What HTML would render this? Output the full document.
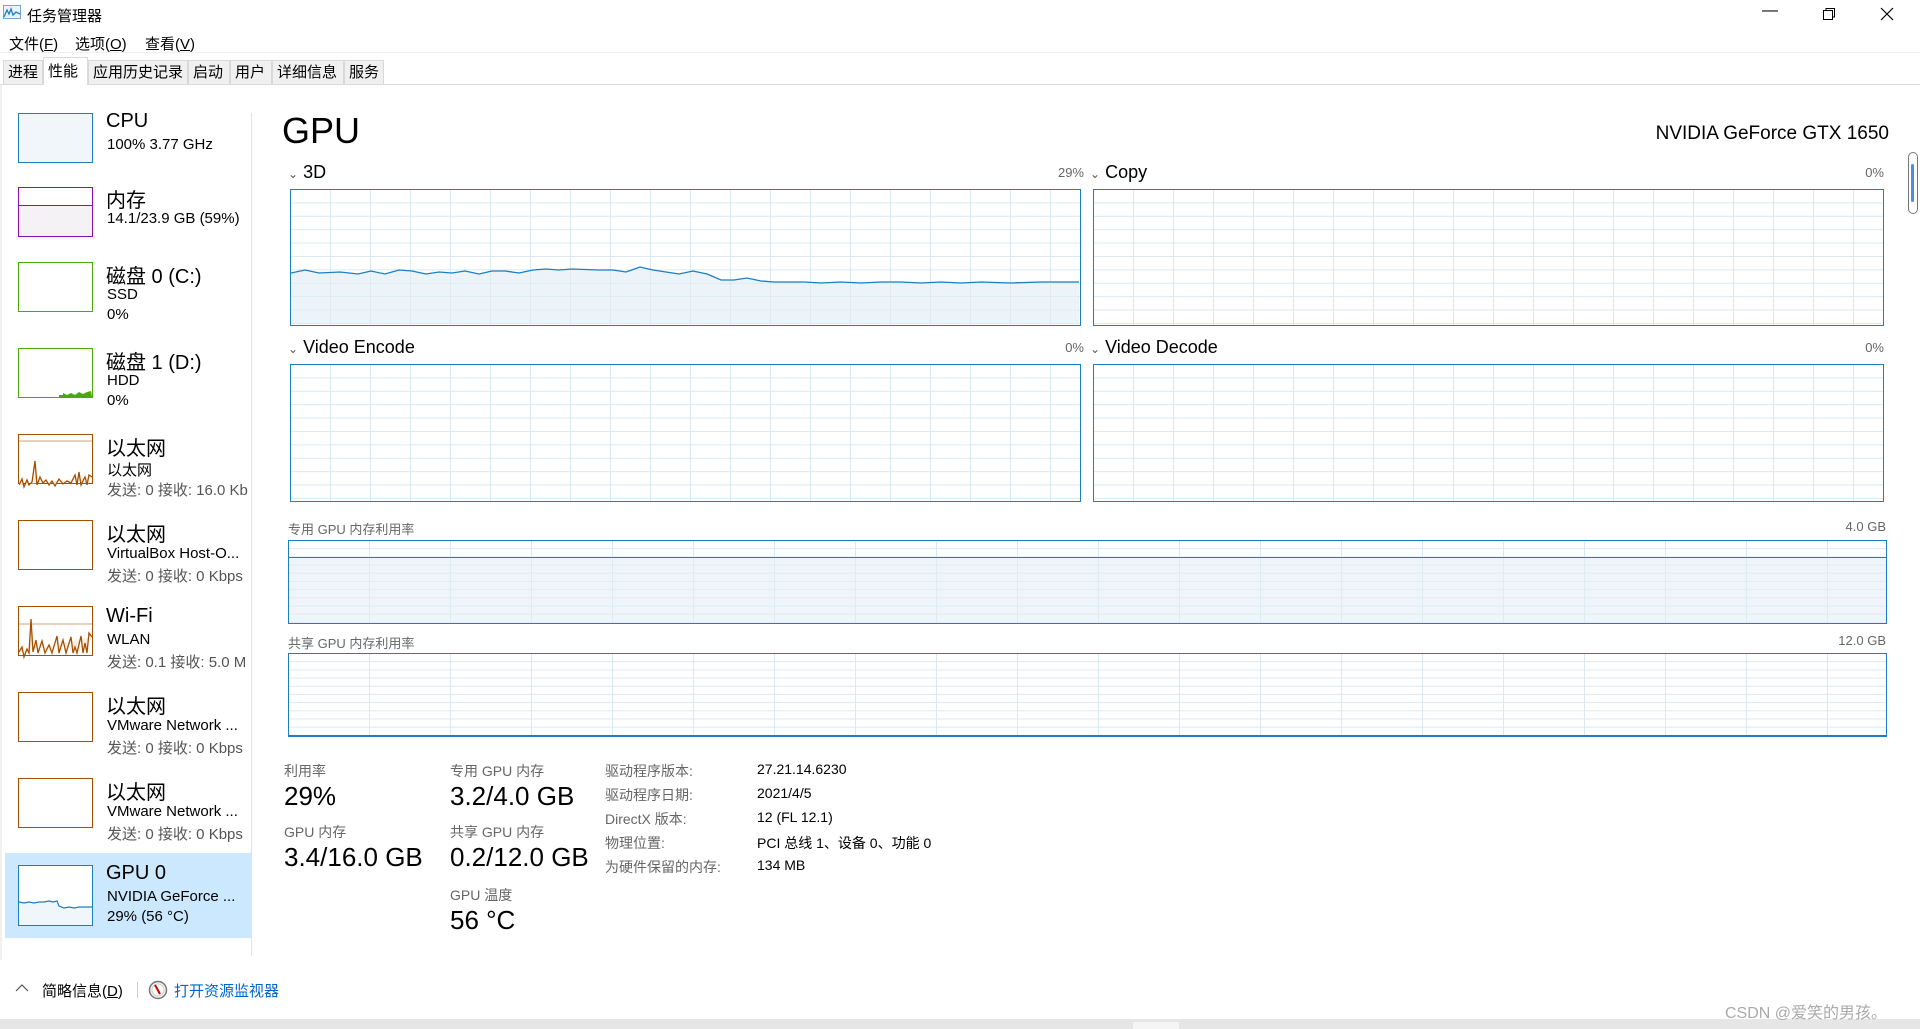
<!DOCTYPE html>
<html><head><meta charset="utf-8"><style>
*{margin:0;padding:0;box-sizing:border-box}
body{width:1920px;height:1029px;overflow:hidden;background:#fff;font-family:"Liberation Sans","Noto Sans CJK SC",sans-serif;color:#000;position:relative}
.a{position:absolute;white-space:nowrap}
.tab{position:absolute;top:60px;height:24px;background:#f0f0f0;border:1px solid #d9d9d9;border-bottom:none;font-size:15px;line-height:24px;padding:0 4px;color:#000}
.thumb{position:absolute;left:18px;width:75px;height:50px;border:1px solid}
.t1{position:absolute;left:106px;font-size:20px}
.t2{position:absolute;left:107px;font-size:15px}
.t3{position:absolute;left:107px;font-size:15px;color:#555}
.g{position:absolute;border:1.5px solid #1b7fc0;background-color:#fff;
background-image:linear-gradient(to right,#d9e9f3 1px,transparent 1px),linear-gradient(to bottom,#d9e9f3 1px,transparent 1px);
background-size:40px 100%,100% 13.4px;background-position:-1px 0,0 -1px}
.gm{background-size:81px 100%,100% 8.2px}
.lbl{position:absolute;font-size:18px}
.pct{position:absolute;font-size:13px;color:#666;text-align:right}
.sl{position:absolute;font-size:14px;color:#666}
.sv{position:absolute;font-size:26px}
.il{position:absolute;font-size:14px;color:#666;left:605px}
.iv{position:absolute;font-size:14px;color:#000;left:757px}
</style></head><body>
<svg class="a" style="left:3px;top:5px" width="18" height="14"><rect x="0.5" y="0.5" width="17" height="13" fill="#eaf3fb" stroke="#7aa7cc"/><polyline points="1,12 4,5 6,9 8,4 10,10 13,7 17,9" fill="none" stroke="#1b7fc0" stroke-width="1.3"/></svg>
<div class="a" style="left:27px;top:5px;font-size:15px">任务管理器</div>
<div class="a" style="left:1762px;top:2px;font-size:16px">&#8212;</div>
<svg class="a" style="left:1822px;top:7px" width="14" height="14"><rect x="1.5" y="3.5" width="9" height="9" fill="none" stroke="#000"/><path d="M4 3.5V1.5h8.5v8.5H10.5" fill="none" stroke="#000"/></svg>
<svg class="a" style="left:1880px;top:7px" width="14" height="14"><path d="M1 1L13 13M13 1L1 13" stroke="#000" stroke-width="1.2"/></svg>
<div class="a" style="left:9px;top:33px;font-size:15px">文件(<u>F</u>)</div>
<div class="a" style="left:75px;top:33px;font-size:15px">选项(<u>O</u>)</div>
<div class="a" style="left:145px;top:33px;font-size:15px">查看(<u>V</u>)</div>
<div class="a" style="left:0;top:52px;width:1920px;height:1px;background:#f0f0f0"></div>
<div class="a" style="left:0;top:84px;width:1920px;height:1px;background:#d9d9d9"></div>
<div class="tab" style="left:3px;width:40px">进程</div>
<div class="tab" style="left:43px;width:45px;top:57px;height:28px;background:#fff;padding-top:2px">性能</div>
<div class="tab" style="left:88px;width:100px">应用历史记录</div>
<div class="tab" style="left:188px;width:42px">启动</div>
<div class="tab" style="left:230px;width:42px">用户</div>
<div class="tab" style="left:272px;width:72px">详细信息</div>
<div class="tab" style="left:344px;width:40px">服务</div>
<div class="a" style="left:0;top:85px;width:2px;height:875px;background:#f0f0f0"></div>
<div class="a" style="left:251px;top:113px;width:1px;height:843px;background:#e3e3e3"></div>
<div class="a" style="left:5px;top:853px;width:246px;height:85px;background:#cce8ff"></div>

<div class="thumb" style="top:113px;border-color:#1b7fc0;background:#f1f6fa"></div>
<div class="t1" style="top:110px">CPU</div><div class="t2" style="top:136px">100% 3.77 GHz</div>

<div class="thumb" style="top:187px;border-color:#8b12ae;background:#fff"><div style="position:absolute;left:0;right:0;top:17px;bottom:0;background:#f4f2f4;border-top:1px solid #8b12ae"></div></div>
<div class="t1" style="top:184px">内存</div><div class="t2" style="top:210px">14.1/23.9 GB (59%)</div>

<div class="thumb" style="top:262px;border-color:#4da60c"></div>
<div class="t1" style="top:260px">磁盘 0 (C:)</div><div class="t2" style="top:286px">SSD</div><div class="t2" style="top:306px">0%</div>

<div class="thumb" style="top:348px;border-color:#4da60c"><svg width="73" height="48" style="position:absolute"><path d="M40 48L40 46L44 46L44 44L48 46L52 44L56 46L60 43L64 45L68 43L72 42L73 48Z" fill="#4da60c"/></svg></div>
<div class="t1" style="top:346px">磁盘 1 (D:)</div><div class="t2" style="top:372px">HDD</div><div class="t2" style="top:392px">0%</div>

<div class="thumb" style="top:434px;border-color:#a74f01"><svg width="73" height="58" style="position:absolute"><line x1="0" y1="6" x2="73" y2="6" stroke="#d2a27a"/><polyline points="0,50 3,44 5,52 8,45 10,50 13,47 16,26 18,50 21,42 24,48 27,45 30,50 33,46 36,51 40,44 44,49 48,46 52,48 56,40 58,50 60,37 62,50 66,42 68,50 70,40 73,42" fill="#fbeee2" stroke="#a74f01" stroke-width="1.3"/></svg></div>
<div class="t1" style="top:432px">以太网</div><div class="t2" style="top:459px">以太网</div><div class="t3" style="top:479px">发送: 0 接收: 16.0 Kb</div>

<div class="thumb" style="top:520px;border-color:#a74f01"></div>
<div class="t1" style="top:518px">以太网</div><div class="t2" style="top:545px">VirtualBox Host-O...</div><div class="t3" style="top:565px">发送: 0 接收: 0 Kbps</div>

<div class="thumb" style="top:606px;border-color:#a74f01"><svg width="73" height="58" style="position:absolute"><line x1="0" y1="17" x2="73" y2="17" stroke="#d2a27a"/><polyline points="0,45 3,40 5,50 8,42 10,46 12,12 14,45 17,33 19,46 23,34 26,46 30,38 33,46 38,29 40,46 44,33 47,46 52,30 54,46 56,40 58,46 62,29 64,46 66,36 68,46 70,26 73,30" fill="#fbeee2" stroke="#a74f01" stroke-width="1.3"/></svg></div>
<div class="t1" style="top:605px">Wi-Fi</div><div class="t2" style="top:631px">WLAN</div><div class="t3" style="top:651px">发送: 0.1 接收: 5.0 M</div>

<div class="thumb" style="top:692px;border-color:#a74f01"></div>
<div class="t1" style="top:690px">以太网</div><div class="t2" style="top:717px">VMware Network ...</div><div class="t3" style="top:737px">发送: 0 接收: 0 Kbps</div>

<div class="thumb" style="top:778px;border-color:#a74f01"></div>
<div class="t1" style="top:776px">以太网</div><div class="t2" style="top:803px">VMware Network ...</div><div class="t3" style="top:823px">发送: 0 接收: 0 Kbps</div>

<div class="thumb" style="top:865px;height:61px;border-color:#1b7fc0;background:#fff"><svg width="73" height="59" style="position:absolute"><path d="M0 36L10 37L20 36L30 36L32 35L38 35L40 40L50 42L60 41L73 41L73 59L0 59Z" fill="#f1f6fa"/><polyline points="0,36 5,37 10,36 15,37 20,36 25,36 30,35 34,36 38,35 40,40 45,42 50,41 55,42 60,41 65,41 73,41" fill="none" stroke="#1b7fc0" stroke-width="1.2"/></svg></div>
<div class="t1" style="top:862px">GPU 0</div><div class="t2" style="top:888px">NVIDIA GeForce ...</div><div class="t2" style="top:908px">29% (56 °C)</div>

<div class="a" style="left:282px;top:110px;font-size:36px">GPU</div>
<div class="a" style="right:31px;top:123px;font-size:19px">NVIDIA GeForce GTX 1650</div>
<div class="a" style="left:1908px;top:152px;width:10px;height:62px;border:1.5px solid #777;border-radius:5px"><div style="position:absolute;left:2px;top:11px;width:3px;height:38px;background:#4a90e2;border-radius:2px"></div></div>

<div class="lbl" style="left:288px;top:162px"><span style="font-size:12px;color:#555">&#8964;</span> 3D</div>
<div class="pct" style="left:1040px;width:44px;top:165px">29%</div>
<div class="lbl" style="left:1090px;top:162px"><span style="font-size:12px;color:#555">&#8964;</span> Copy</div>
<div class="pct" style="left:1840px;width:44px;top:165px">0%</div>
<div class="g" style="left:290px;top:189px;width:791px;height:137px">
<svg width="788" height="134" style="position:absolute;left:0;top:0"><path d="M0 83L14 80L28 83L49 82L67 84L80 81L94 84L108 80L121 81L135 84L148 82L161 83L174 81L188 84L201 81L214 81L228 83L242 80L255 79L268 80L281 79L308 80L322 80L335 82L349 77L362 80L375 82L388 84L402 81L416 84L430 90L443 90L456 88L470 91L483 92L500 92L513 92L530 93L550 92L570 93L590 92L610 92L630 93L650 92L670 93L690 92L720 93L750 92L788 92L788 140L0 140Z" fill="rgba(225,236,245,.6)"/><polyline points="0,83 14,80 28,83 49,82 67,84 80,81 94,84 108,80 121,81 135,84 148,82 161,83 174,81 188,84 201,81 214,81 228,83 242,80 255,79 268,80 281,79 308,80 322,80 335,82 349,77 362,80 375,82 388,84 402,81 416,84 430,90 443,90 456,88 470,91 483,92 500,92 513,92 530,93 550,92 570,93 590,92 610,92 630,93 650,92 670,93 690,92 720,93 750,92 788,92" fill="none" stroke="#1b7fc0" stroke-width="1.3"/></svg></div>
<div class="g" style="left:1093px;top:189px;width:791px;height:137px"></div>

<div class="lbl" style="left:288px;top:337px"><span style="font-size:12px;color:#555">&#8964;</span> Video Encode</div>
<div class="pct" style="left:1040px;width:44px;top:340px">0%</div>
<div class="lbl" style="left:1090px;top:337px"><span style="font-size:12px;color:#555">&#8964;</span> Video Decode</div>
<div class="pct" style="left:1840px;width:44px;top:340px">0%</div>
<div class="g" style="left:290px;top:364px;width:791px;height:138px"></div>
<div class="g" style="left:1093px;top:364px;width:791px;height:138px"></div>

<div class="a" style="left:288px;top:519px;font-size:13px;color:#666">专用 GPU 内存利用率</div>
<div class="pct" style="left:1800px;width:86px;top:519px">4.0 GB</div>
<div class="g gm" style="left:288px;top:540px;width:1599px;height:84px"><div style="position:absolute;left:0;right:0;top:16px;bottom:0;background:rgba(225,236,245,.55);border-top:1.5px solid #1b7fc0"></div></div>
<div class="a" style="left:288px;top:633px;font-size:13px;color:#666">共享 GPU 内存利用率</div>
<div class="pct" style="left:1800px;width:86px;top:633px">12.0 GB</div>
<div class="g gm" style="left:288px;top:653px;width:1599px;height:84px;border-bottom-width:2px"></div>

<div class="sl" style="left:284px;top:761px">利用率</div>
<div class="sv" style="left:284px;top:781px">29%</div>
<div class="sl" style="left:284px;top:822px">GPU 内存</div>
<div class="sv" style="left:284px;top:842px">3.4/16.0 GB</div>
<div class="sl" style="left:450px;top:761px">专用 GPU 内存</div>
<div class="sv" style="left:450px;top:781px">3.2/4.0 GB</div>
<div class="sl" style="left:450px;top:822px">共享 GPU 内存</div>
<div class="sv" style="left:450px;top:842px">0.2/12.0 GB</div>
<div class="sl" style="left:450px;top:885px">GPU 温度</div>
<div class="sv" style="left:450px;top:905px">56 °C</div>

<div class="il" style="top:761px">驱动程序版本:</div><div class="iv" style="top:761px">27.21.14.6230</div>
<div class="il" style="top:785px">驱动程序日期:</div><div class="iv" style="top:785px">2021/4/5</div>
<div class="il" style="top:809px">DirectX 版本:</div><div class="iv" style="top:809px">12 (FL 12.1)</div>
<div class="il" style="top:833px">物理位置:</div><div class="iv" style="top:833px">PCI 总线 1、设备 0、功能 0</div>
<div class="il" style="top:857px">为硬件保留的内存:</div><div class="iv" style="top:857px">134 MB</div>

<svg class="a" style="left:15px;top:983px" width="14" height="10"><path d="M1 8L7 2L13 8" fill="none" stroke="#555" stroke-width="1.2"/></svg>
<div class="a" style="left:42px;top:980px;font-size:15px">简略信息(<u>D</u>)</div>
<div class="a" style="left:137px;top:982px;width:1px;height:16px;background:#ccc"></div>
<svg class="a" style="left:148px;top:980px" width="20" height="20"><circle cx="10" cy="10" r="8.5" fill="#f4f4f4" stroke="#777" stroke-width="1.5"/><circle cx="10" cy="10" r="6" fill="#fff" stroke="#ccc"/><path d="M7 5L12 14" stroke="#c00" stroke-width="2"/></svg>
<div class="a" style="left:174px;top:980px;font-size:15px;color:#0066cc">打开资源监视器</div>
<div class="a" style="left:0;top:1019px;width:1920px;height:10px;background:#e6e6e6"></div>
<div class="a" style="left:1133px;top:1022px;width:46px;height:7px;background:#f5f5f5"></div>
<div class="a" style="left:1725px;top:999px;font-size:16px;color:#aaa">CSDN @爱笑的男孩。</div>
</body></html>
